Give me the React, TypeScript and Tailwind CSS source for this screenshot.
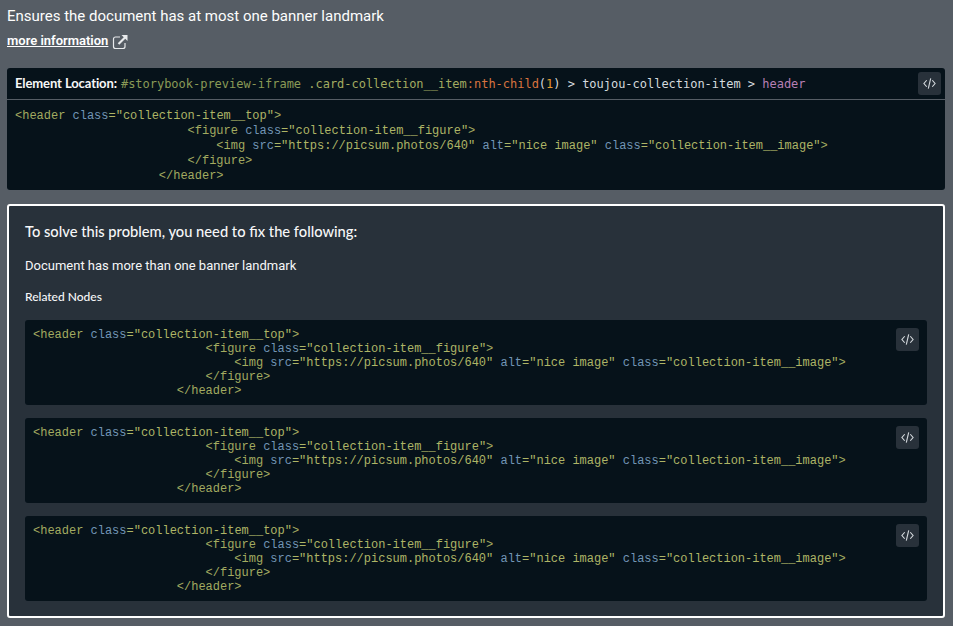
const mono = "font-['DejaVu_Sans_Mono','Liberation_Mono',monospace] text-[12px] tracking-[-0.01px]";

function CodeIcon() {
  return (
    <svg viewBox="0 0 14 14" className="w-[13px] h-[13px]" fill="none" stroke="#d5dade" strokeWidth="1.2">
      <path d="M4 3.5 1 7l3 3.5" />
      <path d="M10 3.5 13 7l-3 3.5" />
      <path d="M8.3 1.5 5.7 12.5" />
    </svg>
  );
}

function LinkIcon() {
  return (
    <svg viewBox="0 0 17 17" className="w-[17px] h-[17px]" fill="none" stroke="#e8eaec">
      <path d="M8 4H3.5A2 2 0 0 0 1.5 6v7.5a2 2 0 0 0 2 2H11a2 2 0 0 0 2-2V10" strokeWidth="1.2" />
      <path d="M6.5 11 14 3.5" strokeWidth="2.2" />
      <path d="M9.5 2h6v6z" fill="#e8eaec" stroke="none" />
    </svg>
  );
}

function CopyBtn() {
  return (
    <button className="w-[23px] h-[23px] rounded-[3px] bg-[#28313a] flex items-center justify-center shrink-0">
      <CodeIcon />
    </button>
  );
}

function Snippet() {
  const tag = "text-[#a3ab60]";
  const attr = "text-[#7295b5]";
  const str = "text-[#aeb566]";
  const Attr = ({ n, v }: { n: string; v: string }) => (
    <>
      <span className={attr}>{n}</span>
      <span className={str}>={`"${v}"`}</span>
    </>
  );
  return (
    <code className="block whitespace-pre">
      <span className={tag}>{"<header "}</span>
      <Attr n="class" v="collection-item__top" />
      <span className={tag}>{">"}</span>
      {"\n"}
      <span className={tag}>{"                        <figure "}</span>
      <Attr n="class" v="collection-item__figure" />
      <span className={tag}>{">"}</span>
      {"\n"}
      <span className={tag}>{"                            <img "}</span>
      <Attr n="src" v="https://picsum.photos/640" />{" "}
      <Attr n="alt" v="nice image" />{" "}
      <Attr n="class" v="collection-item__image" />
      <span className={tag}>{">"}</span>
      {"\n"}
      <span className={tag}>{"                        </figure>"}</span>
      {"\n"}
      <span className={tag}>{"                    </header>"}</span>
    </code>
  );
}

function NodeBlock() {
  return (
    <div className={`relative bg-[#06121a] rounded-[3px] pt-[8px] pl-[8px] pb-[7px] leading-[14px] ${mono}`}>
      <Snippet />
      <div className="absolute top-[8px] right-[8px]">
        <CopyBtn />
      </div>
    </div>
  );
}

export default function App() {
  return (
    <div className="w-[953px] h-[626px] overflow-hidden bg-[#565d65] pl-[7px] pr-[8px] pt-[7px] font-['Roboto',sans-serif] text-white">
      <h2 className="text-[15px] leading-[18px] text-[#fdfdfd]">Ensures the document has at most one banner landmark</h2>
      <a className="mt-[7px] flex items-center gap-[4px] text-[13px] leading-[18px] font-semibold">
        <span className="underline">more information</span>
        <LinkIcon />
      </a>

      {/* Element location */}
      <div className="mt-[18px] bg-[#06121a] rounded-[3px]">
        <div className="h-[32px] flex items-center pl-[8px] pr-[4px] border-b border-[#565d65]">
          <span className="font-['Lato',sans-serif] font-bold text-[13px] tracking-[-0.1px] mr-[4px] text-[#f6f7f8]">Element Location:</span>
          <span className="font-['DejaVu_Sans_Mono','Liberation_Mono',monospace] text-[12px] tracking-[-0.02px] whitespace-pre flex-1 text-[#d5dade]">
            <span className="text-[#8a9a56]">#storybook-preview-iframe</span>{" "}
            <span className="text-[#a3ab60]">.card-collection__item</span>
            <span className="text-[#d9743f]">:nth-child</span>(<span className="text-[#e59a2f]">1</span>) {">"} toujou-collection-item {">"}{" "}
            <span className="text-[#b77fb4]">header</span>
          </span>
          <CopyBtn />
        </div>
        <div className={`pt-[9px] pl-[8px] pb-[6px] leading-[15px] ${mono}`}>
          <Snippet />
        </div>
      </div>

      {/* Fix panel */}
      <div className="mt-[14px] h-[414px] bg-[#28313a] border-2 border-white rounded-[3px] px-[16px] pt-[15px]">
        <h3 className="font-['Lato',sans-serif] font-medium text-[14.7px] leading-[20px] text-[#f6f7f8]">To solve this problem, you need to fix the following:</h3>
        <p className="mt-[17px] text-[13px] leading-[16px] text-[#f6f7f8]">Document has more than one banner landmark</p>
        <h4 className="mt-[15px] font-['Lato',sans-serif] font-medium text-[12px] leading-[16px] text-[#f6f7f8]">Related Nodes</h4>
        <div className="mt-[15px] flex flex-col gap-[13px]">
          <NodeBlock />
          <NodeBlock />
          <NodeBlock />
        </div>
      </div>
    </div>
  );
}
